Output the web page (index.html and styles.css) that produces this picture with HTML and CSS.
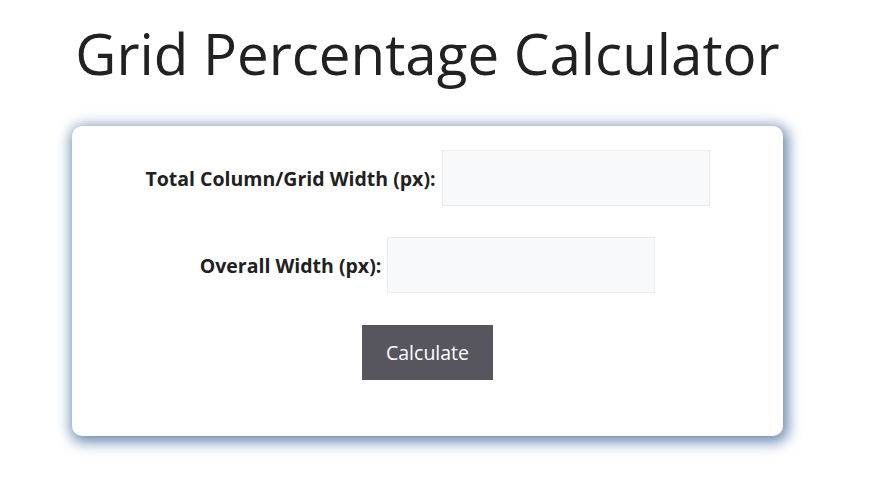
FILE: index.html
```html
<!DOCTYPE html>
<html>
<head>
<meta charset="utf-8">
<link rel="stylesheet" href="styles.css">
</head>
<body>
<div class="wrap">
  <h1 class="title">Grid Percentage Calculator</h1>
  <div class="card">
    <div class="row">
      <label class="label">Total Column/Grid Width (px):</label>
      <input class="field" type="text">
    </div>
    <div class="row">
      <label class="label">Overall Width (px):</label>
      <input class="field" type="text">
    </div>
    <div class="row row-btn">
      <button class="btn">Calculate</button>
    </div>
  </div>
</div>
</body>
</html>
```

FILE: styles.css
```css
html, body {
  margin: 0;
  padding: 0;
  background: #ffffff;
  font-family: "Open Sans", "Noto Sans", sans-serif;
  color: #212529;
}
.wrap {
  width: 711px;
  margin-left: 72px;
  padding-bottom: 40px;
  display: flex;
  flex-direction: column;
  align-items: center;
}
.title {
  margin: 14px 0 0 0;
  font-size: 56.5px;
  font-weight: 400;
  line-height: 80px;
  color: #212121;
}
.card {
  box-sizing: border-box;
  width: 711px;
  height: 310px;
  margin-top: 32px;
  border-radius: 10px;
  background: #fff;
  box-shadow: 2px 3px 14px 3px rgba(80, 115, 160, 0.85);
  padding-top: 24px;
  display: flex;
  flex-direction: column;
  align-items: center;
  gap: 31px;
}
.row {
  display: flex;
  align-items: center;
  gap: 6px;
}
.row-btn {
  margin-top: 1px;
}
.label {
  font-size: 19.5px;
  font-weight: 700;
  color: #212121;
}
.field {
  box-sizing: border-box;
  width: 268px;
  height: 56px;
  background: #f8f9fa;
  border: 1px solid #ececec;
  border-radius: 0;
  margin: 0;
}
.btn {
  box-sizing: border-box;
  width: 131px;
  height: 55px;
  background: #57565f;
  color: #fff;
  border: none;
  font-family: "Open Sans", "Noto Sans", sans-serif;
  font-size: 19.5px;
  padding: 0;
}
```
